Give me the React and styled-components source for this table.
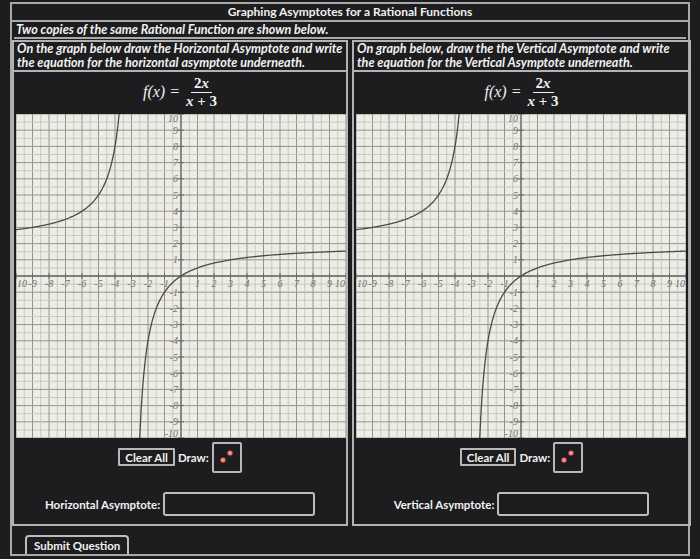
import React from "react";
import styled, { createGlobalStyle } from "styled-components";

const GlobalStyle = createGlobalStyle`
  html, body {
    margin: 0;
    padding: 0;
    background: #1d1d1f;
  }
  body {
    font-family: "Lato", "Open Sans", sans-serif;
    color: #f1f1f1;
  }
`;

const Page = styled.div`
  width: 700px;
  height: 559px;
  box-sizing: border-box;
  padding: 2px 10px 0 10px;
  overflow: hidden;
`;

const Frame = styled.div`
  height: 554px;
  box-sizing: border-box;
  border: 2px solid #a9a9a9;
  display: flex;
  flex-direction: column;
`;

const TitleRow = styled.div`
  height: 16px;
  line-height: 15px;
  text-align: center;
  font-weight: 700;
  font-size: 12px;
  border-bottom: 2px solid #a9a9a9;
`;

const IntroRow = styled.div`
  height: 14px;
  line-height: 14px;
  margin: 1px 2px 1px 2px;
  padding-left: 2px;
  border-bottom: 2px solid #a9a9a9;
  font-weight: 700;
  font-style: italic;
  font-size: 12.6px;
`;

const Columns = styled.div`
  display: grid;
  grid-template-columns: 336px 1fr;
  gap: 4px;
`;

const Panel = styled.div`
  border: 2px solid #b3b3b3;
  display: flex;
  flex-direction: column;
  height: 486px;
  box-sizing: border-box;
`;

const Instruction = styled.div`
  border-bottom: 2px solid #b3b3b3;
  padding: 0 3px;
  font-size: 12.6px;
  line-height: 14px;
  font-weight: 700;
  font-style: italic;
  white-space: nowrap;
  overflow: hidden;
`;

const FormulaRow = styled.div`
  height: 40px;
  display: flex;
  align-items: center;
  justify-content: center;
  gap: 6px;
  font-family: "Liberation Serif", "DejaVu Serif", serif;
  font-size: 15px;
  font-weight: 700;
`;

const Fn = styled.span`
  font-style: italic;
  font-weight: 400;
  font-size: 16px;
`;

const Fraction = styled.span`
  display: inline-flex;
  flex-direction: column;
  align-items: center;
  line-height: 16px;
`;

const Numer = styled.span`
  padding: 0 3px 1px 3px;
  border-bottom: 1.5px solid #f1f1f1;
`;

const Var = styled.i`
  font-weight: 700;
`;

const GraphBox = styled.div`
  padding: 2px 3px 0 2px;
  line-height: 0;
`;

const Controls = styled.div`
  height: 38px;
  display: flex;
  align-items: center;
  justify-content: center;
  gap: 3px;
  font-size: 11.5px;
  font-weight: 700;
`;

const SmallButton = styled.button`
  background: #1d1d1f;
  color: #f1f1f1;
  border: 2px solid #b8b8b8;
  border-radius: 1px;
  font-family: inherit;
  font-size: 11.5px;
  font-weight: 700;
  height: 18px;
  padding: 0 5px;
  line-height: 13px;
`;

const ToolBox = styled.div`
  width: 26px;
  height: 27px;
  border: 2px solid #b8b8b8;
  border-radius: 2px;
  display: flex;
  align-items: center;
  justify-content: center;
`;

const AnswerRow = styled.div`
  flex: 1;
  display: flex;
  align-items: center;
  justify-content: center;
  gap: 3px;
  padding-top: 8px;
  font-size: 11.5px;
  font-weight: 700;
`;

const AnswerInput = styled.input`
  width: 144px;
  height: 18px;
  background: #1d1d1f;
  border: 2px solid #bdbdbd;
  border-radius: 3px;
  color: #fff;
`;

const SubmitRow = styled.div`
  flex: 1;
  display: flex;
  align-items: flex-end;
  padding-left: 13px;
`;

const SubmitButton = styled.button`
  background: #1d1d1f;
  color: #f1f1f1;
  border: 2px solid #bdbdbd;
  border-bottom: none;
  border-radius: 4px 4px 0 0;
  font-family: inherit;
  font-size: 11.5px;
  font-weight: 700;
  height: 19px;
  padding: 0 7px;
`;

const W = 330;
const H = 324;
const sx = (x) => ((x + 10) / 20) * W;
const sy = (y) => ((10 - y) / 20) * H;
const f = (x) => (2 * x) / (x + 3);

function branch(x0, x1) {
  const pts = [];
  const n = 160;
  for (let i = 0; i <= n; i++) {
    const x = x0 + ((x1 - x0) * i) / n;
    pts.push(`${sx(x).toFixed(2)},${sy(f(x)).toFixed(2)}`);
  }
  return "M" + pts.join("L");
}

const curvePath = branch(-10, -3.75) + branch(-2.5, 10);
const steps = Array.from({ length: 41 }, (_, i) => -10 + i * 0.5);
const ints = Array.from({ length: 21 }, (_, i) => -10 + i).filter((v) => v !== 0);

function Graph() {
  const ox = sx(0);
  const oy = sy(0);
  return (
    <svg width={W} height={H} viewBox={`0 0 ${W} ${H}`}>
      <rect width={W} height={H} fill="#edece5" />
      {steps.map((v) => {
        const major = Number.isInteger(v);
        return (
          <g key={v} stroke={major ? "#94948f" : "#c0c0ba"} strokeWidth={major ? 1 : 0.8}>
            <line x1={sx(v)} y1={0} x2={sx(v)} y2={H} />
            <line x1={0} y1={sy(v)} x2={W} y2={sy(v)} />
          </g>
        );
      })}
      <line x1={ox} y1={0} x2={ox} y2={H} stroke="#6a6a66" strokeWidth={1.3} />
      <line x1={0} y1={oy} x2={W} y2={oy} stroke="#6a6a66" strokeWidth={1.3} />
      {ints.map((v) => (
        <g key={v} stroke="#6a6a66" strokeWidth={1}>
          <line x1={sx(v)} y1={oy - 3} x2={sx(v)} y2={oy + 3} />
          <line x1={ox - 3} y1={sy(v)} x2={ox + 3} y2={sy(v)} />
        </g>
      ))}
      <g fontFamily="Liberation Serif, serif" fontStyle="italic" fontSize="10" fill="#727270">
        {ints.map((v) => {
          let x = sx(v);
          let anchor = "middle";
          let label = String(v);
          if (v === -10) {
            x = 1;
            anchor = "start";
            label = "10";
          }
          if (v === 10) {
            x = W - 1;
            anchor = "end";
          }
          return (
            <text key={"x" + v} x={x} y={oy + 11} textAnchor={anchor}>
              {label}
            </text>
          );
        })}
        {ints.map((v) => {
          let y = sy(v) + 3.5;
          if (v === 10) y = 8;
          if (v === -10) y = H - 1;
          return (
            <text key={"y" + v} x={ox - 3} y={y} textAnchor="end">
              {v}
            </text>
          );
        })}
      </g>
      <path d={curvePath} fill="none" stroke="#4a4a48" strokeWidth={1.3} />
    </svg>
  );
}

function LineTool() {
  return (
    <svg width="20" height="20" viewBox="0 0 20 20">
      <circle cx="6" cy="13" r="2.6" fill="#f06a6a" />
      <circle cx="6" cy="13" r="1.3" fill="#ff9c8c" />
      <circle cx="13" cy="6" r="2.6" fill="#f06a6a" />
      <circle cx="13" cy="6" r="1.3" fill="#ff9c8c" />
    </svg>
  );
}

function Formula() {
  return (
    <FormulaRow>
      <Fn>f(x) =</Fn>
      <Fraction>
        <Numer>
          2<Var>x</Var>
        </Numer>
        <span>
          <Var>x</Var> + 3
        </span>
      </Fraction>
    </FormulaRow>
  );
}

function GraphPanel({ lines, answerLabel }) {
  return (
    <Panel>
      <Instruction>
        {lines[0]}
        <br />
        {lines[1]}
      </Instruction>
      <Formula />
      <GraphBox>
        <Graph />
      </GraphBox>
      <Controls>
        <SmallButton>Clear All</SmallButton>
        <span>Draw:</span>
        <ToolBox>
          <LineTool />
        </ToolBox>
      </Controls>
      <AnswerRow>
        <span>{answerLabel}</span>
        <AnswerInput type="text" />
      </AnswerRow>
    </Panel>
  );
}

export default function App() {
  return (
    <>
      <GlobalStyle />
      <Page>
        <Frame>
          <TitleRow>Graphing Asymptotes for a Rational Functions</TitleRow>
          <IntroRow>Two copies of the same Rational Function are shown below.</IntroRow>
          <Columns>
            <GraphPanel
              lines={[
                "On the graph below draw the Horizontal Asymptote and write",
                "the equation for the horizontal asymptote underneath.",
              ]}
              answerLabel="Horizontal Asymptote:"
            />
            <GraphPanel
              lines={[
                "On graph below, draw the the Vertical Asymptote and write",
                "the equation for the Vertical Asymptote underneath.",
              ]}
              answerLabel="Vertical Asymptote:"
            />
          </Columns>
          <SubmitRow>
            <SubmitButton>Submit Question</SubmitButton>
          </SubmitRow>
        </Frame>
      </Page>
    </>
  );
}
